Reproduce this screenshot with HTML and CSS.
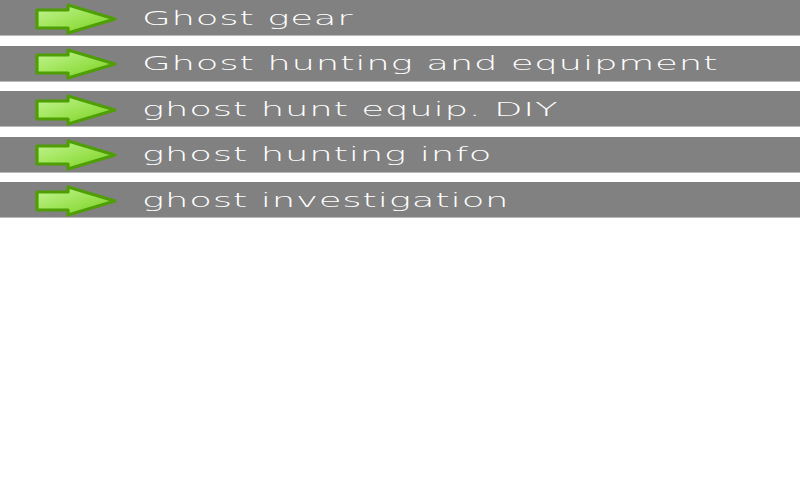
FILE: index.html
```html
<!DOCTYPE html>
<html>
<head>
<meta charset="utf-8">
<link rel="stylesheet" href="styles.css">
</head>
<body>
<svg width="0" height="0" class="defs">
  <defs>
    <linearGradient id="g" x1="0" y1="0" x2="1" y2="1">
      <stop offset="0" stop-color="#c4f594"/>
      <stop offset="0.6" stop-color="#96e04a"/>
      <stop offset="1" stop-color="#74c620"/>
    </linearGradient>
  </defs>
</svg>
<ul class="list">
  <li class="row">
    <svg class="arrow" viewBox="0 0 82 32" width="82" height="32"><polygon points="2,7 33,7 33,2 80,16 33,30 33,25 2,25" fill="url(#g)" stroke="#4f9e05" stroke-width="3.2" stroke-linejoin="round"/></svg>
    <span class="label">Ghost gear</span>
  </li>
  <li class="row">
    <svg class="arrow" viewBox="0 0 82 32" width="82" height="32"><polygon points="2,7 33,7 33,2 80,16 33,30 33,25 2,25" fill="url(#g)" stroke="#4f9e05" stroke-width="3.2" stroke-linejoin="round"/></svg>
    <span class="label">Ghost hunting and equipment</span>
  </li>
  <li class="row">
    <svg class="arrow" viewBox="0 0 82 32" width="82" height="32"><polygon points="2,7 33,7 33,2 80,16 33,30 33,25 2,25" fill="url(#g)" stroke="#4f9e05" stroke-width="3.2" stroke-linejoin="round"/></svg>
    <span class="label">ghost hunt equip. DIY</span>
  </li>
  <li class="row">
    <svg class="arrow" viewBox="0 0 82 32" width="82" height="32"><polygon points="2,7 33,7 33,2 80,16 33,30 33,25 2,25" fill="url(#g)" stroke="#4f9e05" stroke-width="3.2" stroke-linejoin="round"/></svg>
    <span class="label">ghost hunting info</span>
  </li>
  <li class="row">
    <svg class="arrow" viewBox="0 0 82 32" width="82" height="32"><polygon points="2,7 33,7 33,2 80,16 33,30 33,25 2,25" fill="url(#g)" stroke="#4f9e05" stroke-width="3.2" stroke-linejoin="round"/></svg>
    <span class="label">ghost investigation</span>
  </li>
</ul>
</body>
</html>
```
FILE: styles.css
```css
html, body {
  margin: 0;
  padding: 0;
  background: #ffffff;
  width: 800px;
  height: 480px;
  overflow: hidden;
}
.defs {
  position: absolute;
  width: 0;
  height: 0;
}
.list {
  list-style: none;
  margin: 0;
  padding: 0;
  display: flex;
  flex-direction: column;
  gap: 9.6px;
}
.row {
  height: 35px;
  background: #818181;
  border-bottom: 1px solid #b9b9b9;
  display: flex;
  align-items: center;
  padding-left: 35px;
}
.arrow {
  display: block;
  flex: none;
  margin-top: 2px;
}
.label {
  display: inline-block;
  margin-left: 25px;
  font-family: "DejaVu Sans", sans-serif;
  font-weight: 200;
  font-size: 19px;
  letter-spacing: 0.4px;
  color: #ffffff;
  transform: scaleX(1.95);
  transform-origin: left center;
  white-space: nowrap;
}
```
